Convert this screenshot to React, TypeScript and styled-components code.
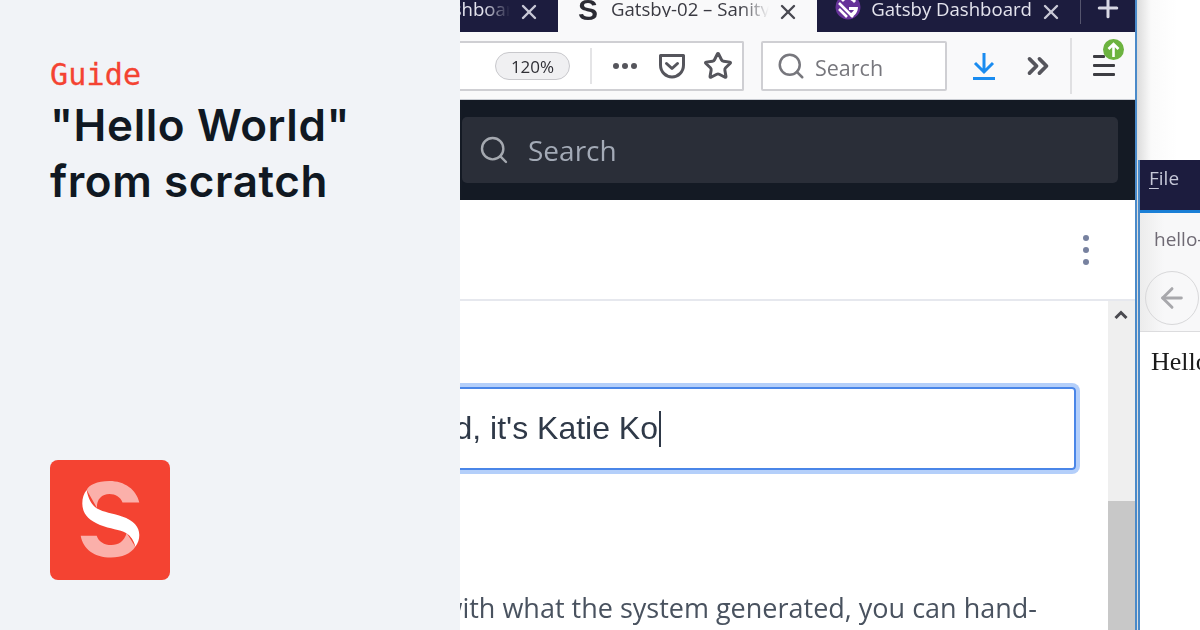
import React from 'react';
import styled, { createGlobalStyle } from 'styled-components';
import { ArrowLeft, ChevronsRight, Plus, Search, Star, X } from 'lucide-react';

const GlobalStyle = createGlobalStyle`
  html, body {
    margin: 0;
    padding: 0;
    width: 1200px;
    height: 630px;
    overflow: hidden;
    background: #f1f3f7;
  }
`;

const Page = styled.div`
  display: flex;
  width: 1200px;
  height: 630px;
  overflow: hidden;
`;

const Intro = styled.aside`
  width: 460px;
  flex-shrink: 0;
  box-sizing: border-box;
  padding: 58px 50px 50px;
  display: flex;
  flex-direction: column;
  justify-content: space-between;
  background: #f1f3f7;
`;

const Kicker = styled.div`
  font-family: 'DejaVu Sans Mono', monospace;
  font-size: 30px;
  line-height: 34px;
  letter-spacing: 0.2px;
  -webkit-text-stroke: 0.3px #f44332;
  color: #f44332;
`;

const Title = styled.h1`
  margin: 5px 0 0;
  font-family: Inter, sans-serif;
  font-size: 44px;
  font-weight: 600;
  line-height: 56px;
  letter-spacing: 0.6px;
  color: #101822;
`;

const Logo = styled.div`
  width: 120px;
  height: 120px;
  border-radius: 8px;
  background: #f44332;

  svg {
    display: block;
  }
`;

const Shot = styled.div`
  flex: 1;
  display: flex;
  min-width: 0;
  filter: blur(0.45px);
`;

const BrowserWindow = styled.section`
  width: 677px;
  flex-shrink: 0;
  box-sizing: border-box;
  display: flex;
  flex-direction: column;
  background: #fff;
  border-right: 2px solid #4a8ac9;
`;

const TabBar = styled.div`
  height: 32px;
  flex-shrink: 0;
  display: flex;
  background: #1c1c3e;
  overflow: hidden;
`;

const Tab = styled.div<{ $width: number; $active?: boolean }>`
  width: ${p => p.$width}px;
  flex-shrink: 0;
  box-sizing: border-box;
  display: flex;
  justify-content: flex-end;
  align-items: flex-start;
  gap: 7px;
  padding-right: 17px;
  overflow: hidden;
  font-family: 'Open Sans', sans-serif;
  font-size: 18.6px;
  line-height: 17px;
  white-space: nowrap;
  background: ${p => (p.$active ? '#f9f9fa' : 'transparent')};
  color: ${p => (p.$active ? '#3a3a42' : '#e4e4ee')};
  svg {
    flex-shrink: 0;
  }
`;

const TabTitle = styled.span<{ $width: number }>`
  display: block;
  width: ${p => p.$width}px;
  overflow: hidden;
  flex-shrink: 0;
  mask-image: linear-gradient(90deg, #000 82%, transparent);
`;

const TabGlyph = styled.span`
  margin-right: 6px;
  font-family: 'Liberation Sans', sans-serif;
  font-size: 30px;
  line-height: 19px;
  font-weight: 700;
  color: #2b2b33;
`;

const TabTail = styled.div`
  flex: 1;
  display: flex;
  justify-content: center;
  border-left: 1px solid #55556e;
  height: 24px;
  color: #d8d8e4;
`;

const Toolbar = styled.div`
  height: 68px;
  flex-shrink: 0;
  box-sizing: border-box;
  display: flex;
  align-items: center;
  background: #f9f9fa;
  border-bottom: 1px solid #c9ccd2;
  color: #55555c;
`;

const UrlBar = styled.div`
  width: 284px;
  height: 50px;
  box-sizing: border-box;
  padding-top: 1px;
  display: flex;
  align-items: center;
  background: #fff;
  border: 2px solid #cfcfd3;
  border-left: 0;
  border-radius: 0 2px 2px 0;
`;

const ZoomPill = styled.div`
  width: 75px;
  height: 28px;
  margin-left: 35px;
  box-sizing: border-box;
  display: flex;
  align-items: center;
  justify-content: center;
  border: 1px solid #c8c8cc;
  border-radius: 14px;
  background: #f0f0f2;
  font-family: 'Open Sans', sans-serif;
  font-size: 17px;
  color: #2f2f35;
`;

const UrlDivider = styled.div`
  width: 2px;
  height: 36px;
  margin: 0 20px;
  background: #e4e4e6;
`;

const Dots = styled.div`
  display: flex;
  gap: 3px;
  margin-left: 1px;
`;

const Dot = styled.span`
  width: 6px;
  height: 6px;
  border-radius: 50%;
  background: #55555c;
`;

const SearchBox = styled.div`
  width: 186px;
  height: 50px;
  margin-left: 17px;
  box-sizing: border-box;
  padding-left: 13px;
  display: flex;
  align-items: center;
  gap: 9px;
  background: #fff;
  border: 2px solid #cfcfd3;
  border-radius: 2px;
  font-family: 'Open Sans', sans-serif;
  font-size: 21.5px;
  color: #77777d;
`;

const SearchLabel = styled.span`
  padding-top: 3px;
`;

const ToolIcons = styled.div`
  flex: 1;
  display: flex;
  align-items: center;
  padding-left: 25px;
`;

const ToolDivider = styled.div`
  width: 2px;
  height: 56px;
  margin-left: 15px;
  background: #e0e0e2;
`;

const MenuButton = styled.div`
  position: relative;
  width: 22px;
  margin-left: 21px;
  display: flex;
  flex-direction: column;
  gap: 6px;
`;

const MenuLine = styled.span<{ $short?: boolean }>`
  display: block;
  height: 3px;
  width: ${p => (p.$short ? 12 : 22)}px;
  border-radius: 1px;
  background: #3d3d42;
`;

const UpdateBadge = styled.span`
  position: absolute;
  top: -16px;
  left: 10px;
  width: 21px;
  height: 21px;
  border-radius: 50%;
  background: #6cb33f;
  color: #fff;
  display: flex;
  align-items: center;
  justify-content: center;
`;

const AppBar = styled.div`
  height: 100px;
  flex-shrink: 0;
  box-sizing: border-box;
  padding: 17px 17px 17px 2px;
  background: #141a24;
`;

const AppSearch = styled.div`
  height: 100%;
  box-sizing: border-box;
  padding-left: 16px;
  display: flex;
  align-items: center;
  gap: 18px;
  border-radius: 5px;
  background: #2a2e38;
  font-family: 'Open Sans', sans-serif;
  font-size: 28px;
  color: #a3aab6;
`;

const PaneHeader = styled.div`
  height: 101px;
  flex-shrink: 0;
  box-sizing: border-box;
  display: flex;
  flex-direction: column;
  align-items: flex-end;
  justify-content: center;
  gap: 6px;
  padding-right: 46px;
  border-bottom: 2px solid #e6e8ee;
`;

const MenuDot = styled.span`
  width: 6px;
  height: 6px;
  border-radius: 50%;
  background: #77819f;
`;

const PaneBody = styled.div`
  flex: 1;
  min-height: 0;
  display: flex;
`;

const Form = styled.div`
  flex: 1;
  min-width: 0;
  display: flex;
  flex-direction: column;
  padding-top: 86px;
  overflow: hidden;
`;

const TitleInput = styled.div`
  height: 83px;
  width: 616px;
  box-sizing: border-box;
  display: flex;
  align-items: center;
  justify-content: flex-end;
  padding-right: 413px;
  border: 2px solid #4a86e8;
  border-left: 0;
  border-radius: 0 4px 4px 0;
  box-shadow: 0 0 0 4px #b4cffa;
  font-family: 'Liberation Sans', sans-serif;
  font-size: 32px;
  color: #2f3948;
  white-space: nowrap;
  overflow: hidden;
`;

const Caret = styled.span`
  width: 2px;
  height: 36px;
  margin-left: 1px;
  flex-shrink: 0;
  background: #2f3948;
`;

const BodyText = styled.div`
  width: 577px;
  margin-top: 118px;
  display: flex;
  justify-content: flex-end;
  font-family: 'Open Sans', sans-serif;
  font-size: 27px;
  line-height: 40px;
  color: #49525f;
  white-space: nowrap;
  overflow: hidden;
`;

const Scrollbar = styled.div`
  width: 27px;
  flex-shrink: 0;
  display: flex;
  flex-direction: column;
  background: #efefef;
`;

const ScrollArrow = styled.div`
  height: 200px;
  display: flex;
  justify-content: center;
  padding-top: 9px;
  box-sizing: border-box;
  color: #4a4a50;
  svg {
    margin-left: -2px;
  }
`;

const ScrollThumb = styled.div`
  flex: 1;
  background: #c8c8c8;
`;

const SideArea = styled.div`
  flex: 1;
  min-width: 0;
  display: flex;
  flex-direction: column;
  background: linear-gradient(90deg, #dcdcdc, #fafafa 14px, #fff 40px);
`;

const SideGap = styled.div`
  height: 160px;
  flex-shrink: 0;
`;

const SideWindow = styled.section`
  flex: 1;
  margin-left: 1px;
  display: flex;
  flex-direction: column;
  background: #fff;
  border-left: 2px solid #4a8ac9;
  overflow: hidden;
  white-space: nowrap;
`;

const SideMenu = styled.div`
  height: 53px;
  flex-shrink: 0;
  box-sizing: border-box;
  padding: 6px 0 0 9px;
  background: #1c1c3e;
  border-bottom: 3px solid #1a7fd6;
  font-family: 'Open Sans', sans-serif;
  font-size: 19px;
  line-height: 24px;
  color: #c6c8d8;
  u {
    text-underline-offset: 3px;
  }
`;

const SideChrome = styled.div`
  height: 119px;
  flex-shrink: 0;
  box-sizing: border-box;
  padding: 14px 0 0 14px;
  background: linear-gradient(90deg, #ececec, #f8f8f9 24px);
  border-bottom: 1px solid #dcdcde;
  font-family: 'Open Sans', sans-serif;
  font-size: 19px;
  line-height: 24px;
  color: #6f6a74;
`;

const BackButton = styled.div`
  width: 54px;
  height: 54px;
  margin: 20px 0 0 -9px;
  box-sizing: border-box;
  display: flex;
  align-items: center;
  justify-content: center;
  border: 1px solid #d8d8da;
  border-radius: 50%;
  color: #a8a8ac;
`;

const SideContent = styled.div`
  padding: 13px 0 0 11px;
  font-family: 'Liberation Serif', serif;
  font-size: 26px;
  line-height: 34px;
  color: #1a1a1a;
`;

const SanityMark = () => (
  <svg width="120" height="120" viewBox="0 0 120 120">
    <path
      fill="#fbb0aa"
      d="M89.3 42.5C86.5 29.5 74.5 21 59.5 21C47 21 38.5 25 36.7 30L47 48C46.5 39 52 34 59.5 34C65.5 34 70.5 37 72.5 42.5Z"
    />
    <path
      fill="#fbb0aa"
      d="M30.7 75.7H46.7C48.5 81.5 54 85 61.5 85C68.5 85 74 81.5 76.7 73L85.3 86.7C81 93.5 72 97.5 61 97.5C44.5 97.5 33 89 30.7 75.7Z"
    />
    <path
      fill="#fff"
      d="M36.7 30C33.8 33.5 32.3 38 32.3 43.5C32.3 53 38 60 50 65C60 69 70 69.5 76 73C81 76 84 81 85.3 86.7C88 83 89.3 79.5 89.3 75C89.3 67 84 60.5 72 56.5C62 53 54 52.5 47 48.5C41.5 45 38 38 36.7 30Z"
    />
  </svg>
);

const GatsbyIcon = () => (
  <svg width="26" height="26" viewBox="0 0 26 26" style={{ marginTop: -6, marginRight: 3 }}>
    <circle cx="13" cy="13" r="12.5" fill="#663399" />
    <path d="M4 15L12 23M4 9L18 23" stroke="#fff" strokeWidth="2.6" fill="none" />
    <path d="M6 6C10 1 18 2 21 7L19 9C16 5 11 4 8 8ZM14 13H23C23 18 20 22 16 23L14 20C16 19 18 18 19 16H14Z" fill="#fff" />
  </svg>
);

const PocketIcon = () => (
  <svg width="28" height="28" viewBox="0 0 28 28" fill="none" stroke="#55555c" strokeWidth="3" style={{ marginLeft: 21 }}>
    <path d="M2.5 3.5H25.5V13C25.5 20 20 25 14 25C8 25 2.5 20 2.5 13Z" strokeLinejoin="round" />
    <path d="M8.5 11.5L14 16.5L19.5 11.5" strokeLinecap="round" strokeLinejoin="round" />
  </svg>
);

const DownloadIcon = () => (
  <svg width="24" height="30" viewBox="0 0 24 30" fill="none" stroke="#1a8cf0" strokeWidth="3">
    <path d="M12 2V20M3 12L12 21L21 12" />
    <path d="M1 27.5H23" />
  </svg>
);

const App: React.FC = () => {
  return (
    <>
      <GlobalStyle />
      <Page>
        <Intro>
          <div>
            <Kicker>Guide</Kicker>
            <Title>
              "Hello World"
              <br />
              from scratch
            </Title>
          </div>
          <Logo>
            <SanityMark />
          </Logo>
        </Intro>
        <Shot>
          <BrowserWindow>
            <TabBar>
              <Tab $width={98}>
                <TabTitle $width={146}>Gatsby Dashboard</TabTitle>
                <X size={24} strokeWidth={2.4} color="#c8c8d6" />
              </Tab>
              <Tab $width={259} $active>
                <TabGlyph>S</TabGlyph>
                <TabTitle $width={158}>Gatsby-02 – Sanity</TabTitle>
                <X size={24} strokeWidth={2.4} color="#4a4a52" />
              </Tab>
              <Tab $width={263}>
                <GatsbyIcon />
                <span>Gatsby Dashboard</span>
                <X size={24} strokeWidth={2.4} color="#c8c8d6" />
              </Tab>
              <TabTail>
                <Plus size={30} strokeWidth={2.4} style={{ marginTop: -7 }} />
              </TabTail>
            </TabBar>
            <Toolbar>
              <UrlBar>
                <ZoomPill>120%</ZoomPill>
                <UrlDivider />
                <Dots>
                  <Dot />
                  <Dot />
                  <Dot />
                </Dots>
                <PocketIcon />
                <Star size={30} strokeWidth={2.4} style={{ marginLeft: 17 }} />
              </UrlBar>
              <SearchBox>
                <Search size={30} strokeWidth={2} />
                <SearchLabel>Search</SearchLabel>
              </SearchBox>
              <ToolIcons>
                <DownloadIcon />
                <ChevronsRight size={34} strokeWidth={2.6} style={{ marginLeft: 25 }} />
                <ToolDivider />
                <MenuButton>
                  <MenuLine $short />
                  <MenuLine />
                  <MenuLine />
                  <UpdateBadge>
                    <svg width="13" height="15" viewBox="0 0 13 15" fill="none" stroke="#fff" strokeWidth="2.6">
                      <path d="M6.5 15V2M1.5 7L6.5 2L11.5 7" />
                    </svg>
                  </UpdateBadge>
                </MenuButton>
              </ToolIcons>
            </Toolbar>
            <AppBar>
              <AppSearch>
                <Search size={32} strokeWidth={1.8} color="#a5a9b0" />
                Search
              </AppSearch>
            </AppBar>
            <PaneHeader>
              <MenuDot />
              <MenuDot />
              <MenuDot />
            </PaneHeader>
            <PaneBody>
              <Form>
                <TitleInput>
                  Hello World, it's Katie Ko
                  <Caret />
                </TitleInput>
                <BodyText>with what the system generated, you can hand-</BodyText>
              </Form>
              <Scrollbar>
                <ScrollArrow>
                  <svg width="14" height="9" viewBox="0 0 14 9" fill="none" stroke="currentColor" strokeWidth="3">
                    <path d="M1.5 8L7 2.5L12.5 8" />
                  </svg>
                </ScrollArrow>
                <ScrollThumb />
              </Scrollbar>
            </PaneBody>
          </BrowserWindow>
          <SideArea>
            <SideGap />
            <SideWindow>
              <SideMenu>
                <u>F</u>ile
              </SideMenu>
              <SideChrome>
                hello-world
                <BackButton>
                  <ArrowLeft size={32} strokeWidth={2.2} />
                </BackButton>
              </SideChrome>
              <SideContent>Hello World</SideContent>
            </SideWindow>
          </SideArea>
        </Shot>
      </Page>
    </>
  );
};

export default App;
